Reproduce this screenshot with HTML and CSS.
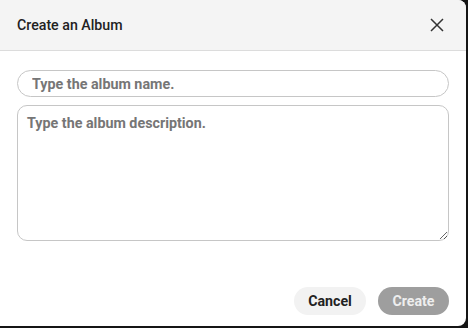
FILE: index.html
```html
<!DOCTYPE html>
<html>
<head>
<meta charset="utf-8">
<link rel="stylesheet" href="styles.css">
</head>
<body>
<div class="dialog">
  <div class="header">
    <span class="title">Create an Album</span>
    <button class="close" aria-label="Close">
      <svg width="14" height="14" viewBox="0 0 14 14"><path d="M1 1L13 13M13 1L1 13" stroke="#333" stroke-width="1.5" fill="none"/></svg>
    </button>
  </div>
  <div class="body">
    <input class="name" type="text" placeholder="Type the album name.">
    <textarea class="desc" placeholder="Type the album description."></textarea>
  </div>
  <div class="footer">
    <button class="btn cancel">Cancel</button>
    <button class="btn create">Create</button>
  </div>
</div>
</body>
</html>
```
FILE: styles.css
```css
html, body {
  margin: 0;
  padding: 0;
  background: #151515;
  width: 468px;
  height: 328px;
  overflow: hidden;
}
.dialog {
  width: 466px;
  height: 326px;
  background: #fff;
  border-radius: 0 8px 8px 0;
  overflow: hidden;
  display: flex;
  flex-direction: column;
  font-family: Roboto, "Liberation Sans", sans-serif;
}
.header {
  height: 50px;
  background: #f4f4f4;
  border-bottom: 1px solid #dcdcdc;
  display: flex;
  align-items: center;
  justify-content: space-between;
  padding: 0 22px 0 17px;
}
.title {
  font-size: 14.2px;
  font-weight: 500;
  color: #222;
}
.close {
  border: 0;
  background: transparent;
  padding: 0;
  width: 14px;
  height: 14px;
  display: flex;
}
.body {
  padding: 19px 17px 0 17px;
  display: flex;
  flex-direction: column;
  gap: 8px;
}
.name {
  box-sizing: border-box;
  height: 27px;
  border: 1px solid #c6c6c6;
  border-radius: 14px;
  padding: 0 14px;
  font-family: Roboto, "Liberation Sans", sans-serif;
  font-size: 14.3px;
  font-weight: 700;
  outline: none;
}
.desc {
  box-sizing: border-box;
  height: 136px;
  border: 1px solid #c6c6c6;
  border-radius: 10px;
  padding: 9px 9px;
  font-family: Roboto, "Liberation Sans", sans-serif;
  font-size: 14.3px;
  font-weight: 700;
  outline: none;
  resize: vertical;
}
.name::placeholder, .desc::placeholder {
  color: #767676;
  opacity: 1;
}
.footer {
  margin-top: auto;
  display: flex;
  justify-content: flex-end;
  gap: 12px;
  padding: 0 17px 11px 0;
}
.btn {
  height: 28px;
  border: 0;
  border-radius: 14px;
  font-family: Roboto, "Liberation Sans", sans-serif;
  font-size: 14.2px;
  font-weight: 700;
  padding: 0 10px;
}
.cancel {
  width: 72px;
  background: #f2f2f2;
  color: #222;
}
.create {
  width: 71px;
  background: #9e9e9e;
  color: #eeeeee;
}
```
